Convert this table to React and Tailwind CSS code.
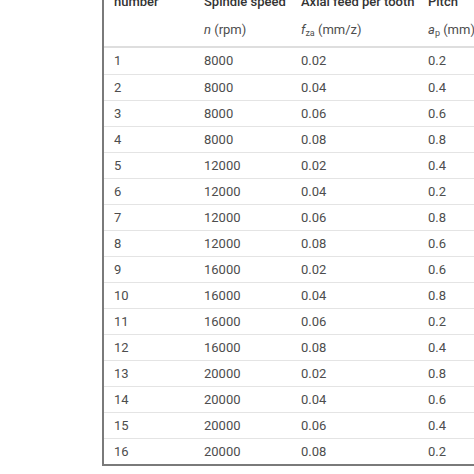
const rows = [
  ["1", "8000", "0.02", "0.2"],
  ["2", "8000", "0.04", "0.4"],
  ["3", "8000", "0.06", "0.6"],
  ["4", "8000", "0.08", "0.8"],
  ["5", "12000", "0.02", "0.4"],
  ["6", "12000", "0.04", "0.2"],
  ["7", "12000", "0.06", "0.8"],
  ["8", "12000", "0.08", "0.6"],
  ["9", "16000", "0.02", "0.6"],
  ["10", "16000", "0.04", "0.8"],
  ["11", "16000", "0.06", "0.2"],
  ["12", "16000", "0.08", "0.4"],
  ["13", "20000", "0.02", "0.8"],
  ["14", "20000", "0.04", "0.6"],
  ["15", "20000", "0.06", "0.4"],
  ["16", "20000", "0.08", "0.2"],
];

const cols = "grid grid-cols-[90px_97px_127px_120px]";

export default function App() {
  return (
    <div
      className="w-[474px] h-[474px] overflow-hidden bg-white"
      style={{ fontFamily: "Roboto, 'Liberation Sans', sans-serif" }}
    >
      <div className="ml-[102px] mt-[-9px] w-[400px] border-l-2 border-b-2 border-[#7a7a7a] text-[13px] text-[#4d4d4d]">
        <div className={`${cols} border-b-2 border-[#dedede] pb-[4px]`}>
          <div className="pl-[10px]">
            <div className="h-[26px] leading-[21px] font-medium text-[#333]">number</div>
          </div>
          <div className="pl-[10px]">
            <div className="h-[26px] leading-[21px] font-medium text-[#333]">Spindle speed</div>
            <div className="h-[25px] leading-[25px]">
              <i>n</i> (rpm)
            </div>
          </div>
          <div className="pl-[10px]">
            <div className="h-[26px] leading-[21px] font-medium text-[#333]">Axial feed per tooth</div>
            <div className="h-[25px] leading-[25px]">
              <i>f</i>
              <sub className="text-[9px]">za</sub> (mm/z)
            </div>
          </div>
          <div className="pl-[10px]">
            <div className="h-[26px] leading-[21px] font-medium text-[#333]">Pitch</div>
            <div className="h-[25px] leading-[25px]">
              <i>a</i>
              <sub className="text-[9px]">p</sub> (mm)
            </div>
          </div>
        </div>
        {rows.map((r, i) => (
          <div
            key={i}
            className={`${cols} h-[26px] items-center ${i > 0 ? "border-t border-[#e4e4e4]" : ""}`}
          >
            {r.map((c, j) => (
              <div key={j} className="pl-[10px]">
                {c}
              </div>
            ))}
          </div>
        ))}
      </div>
    </div>
  );
}
